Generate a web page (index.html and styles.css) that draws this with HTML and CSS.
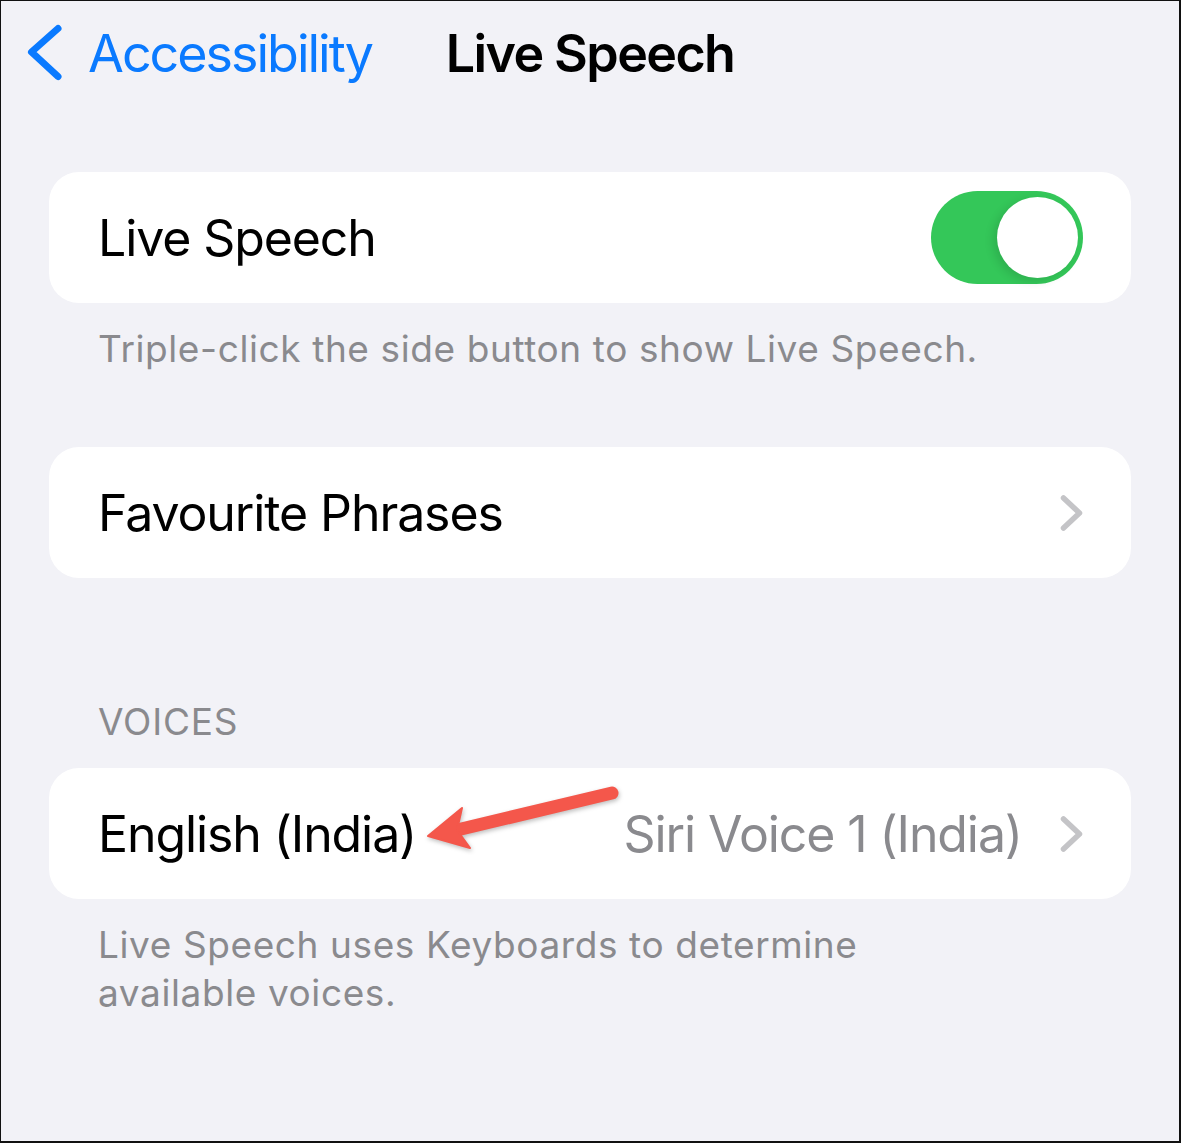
FILE: index.html
```html
<!DOCTYPE html>
<html lang="en">
  <head>
    <meta charset="UTF-8" />
    <meta name="viewport" content="width=device-width, initial-scale=1.0" />
    <title>Live Speech</title>

    <link rel="stylesheet" href="styles.css">
  </head>

  <body>
    <div class="screen">
      <!-- top bar -->
      <header class="nav">
        <div class="nav-back">
          <svg class="back-chevron" width="40" height="60" viewBox="0 0 40 60">
            <polyline points="33,5.5 6.5,29 33,53.5" />
          </svg>
          <span>Accessibility</span>
        </div>
        <div class="nav-title">Live Speech</div>
        <div></div>
      </header>

      <section class="group first">
        <div class="cell">
          <span class="label">Live Speech</span>
          <div class="switch on">
            <div class="knob"></div>
          </div>
        </div>
      </section>
      <p class="footnote">Triple-click the side button to show Live Speech.</p>

      <section class="group phrases">
        <div class="cell">
          <span class="label">Favourite Phrases</span>
          <svg class="chevron" width="24" height="40" viewBox="0 0 24 40">
            <polyline points="4.5,5 20.5,20 4.5,35" />
          </svg>
        </div>
      </section>

      <h4 class="group-header">VOICES</h4>
      <section class="group voices">
        <div class="cell">
          <span class="label">English (India)</span>
          <span class="detail">Siri Voice 1 (India)</span>
          <svg class="chevron" width="24" height="40" viewBox="0 0 24 40">
            <polyline points="4.5,5 20.5,20 4.5,35" />
          </svg>

          <!-- red pointer drawn over the row -->
          <svg class="pointer" width="600" height="131" viewBox="0 0 600 131">
            <line x1="563" y1="25" x2="408" y2="62" />
            <polygon points="379,68 413,40 408,62 421,80" />
          </svg>
        </div>
      </section>
      <p class="footnote">Live Speech uses Keyboards to determine<br />available voices.</p>
    </div>
  </body>
</html>
```

FILE: styles.css
```css
* {
  box-sizing: border-box;
}

body {
  margin: 0;
  background-color: #f2f2f7;
  font-family: Inter, "Noto Sans", sans-serif;
  color: #000;
}

.screen {
  width: 1181px;
  height: 1143px;
  border-style: solid;
  border-color: #111;
  border-width: 1px 2px 2px 1px;
  background-color: #f2f2f7;
}

.nav {
  height: 104px;
  display: grid;
  grid-template-columns: 1fr auto 1fr;
  align-items: center;
}

.nav-back {
  display: flex;
  align-items: center;
  padding-left: 24px;
  gap: 23px;
  color: #0a7aff;
  font-size: 52px;
  letter-spacing: -2px;
}

.back-chevron polyline {
  fill: none;
  stroke: #0a7aff;
  stroke-width: 7;
  stroke-linecap: round;
  stroke-linejoin: round;
}

.nav-title {
  font-size: 52px;
  font-weight: 600;
  letter-spacing: -1.6px;
}

.group {
  margin: 0 48px 0 48px;
  background-color: #fff;
  border-radius: 30px;
}

.group.first {
  margin-top: 67px;
}

.group.phrases {
  margin-top: 74px;
}

.cell {
  position: relative;
  height: 131px;
  display: flex;
  align-items: center;
  padding: 0 48px 0 49px;
}

.label {
  font-size: 50px;
  letter-spacing: -1.1px;
  flex: 1;
}

.detail {
  font-size: 50px;
  letter-spacing: -1.1px;
  color: #8a8a8e;
  margin-right: 37px;
}

.chevron polyline {
  fill: none;
  stroke: #c4c4c7;
  stroke-width: 5.5;
  stroke-linecap: round;
  stroke-linejoin: round;
}

.switch {
  width: 152px;
  height: 93px;
  border-radius: 47px;
  background-color: #e9e9eb;
  display: flex;
  align-items: center;
  padding: 0 5px;
}

.switch.on {
  background-color: #34c759;
  justify-content: flex-end;
}

.knob {
  width: 81px;
  height: 81px;
  border-radius: 50%;
  background-color: #fff;
  box-shadow: -4px 3px 10px rgba(0, 0, 0, 0.12);
}

.footnote {
  margin: 22px 0 0;
  padding: 0 60px 0 97px;
  font-size: 37px;
  line-height: 48px;
  letter-spacing: 0.6px;
  color: #8a8a8e;
}

.group-header {
  margin: 120px 0 22px;
  padding-left: 97px;
  font-size: 37px;
  line-height: 48px;
  letter-spacing: 0.8px;
  font-weight: 400;
  color: #8a8a8e;
}

.pointer {
  position: absolute;
  left: 0;
  top: 0;
  filter: drop-shadow(1px 2px 2px rgba(0, 0, 0, 0.25));
}

.pointer line {
  stroke: #f4574b;
  stroke-width: 13;
  stroke-linecap: round;
}

.pointer polygon {
  fill: #f4574b;
  stroke: #f4574b;
  stroke-width: 2;
  stroke-linejoin: round;
}
```
